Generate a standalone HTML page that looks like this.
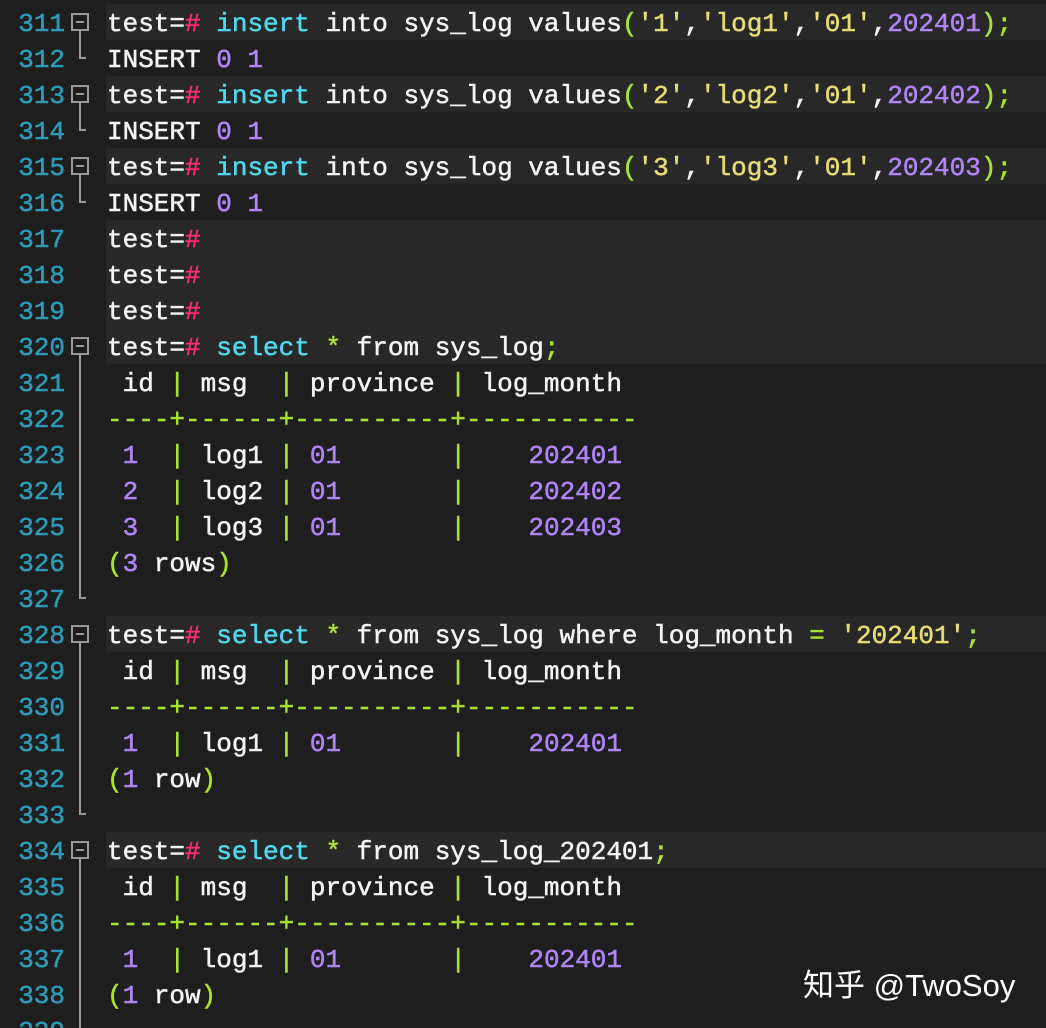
<!DOCTYPE html>
<html><head><meta charset="utf-8"><style>
html,body{margin:0;padding:0;background:#1e1e1e;width:1046px;height:1028px;overflow:hidden}
#c{position:relative;width:1046px;height:1028px;font-family:"Liberation Mono",monospace;font-size:26px}
.l{position:absolute;left:0;width:1046px;height:36px;line-height:40px;white-space:pre;-webkit-text-stroke:0.5px currentColor}
.n{position:absolute;left:0;width:65px;text-align:right;color:#2a9bb8}
.t{position:absolute;left:107px;color:#f4f4f4}
.hl{position:absolute;left:106px;right:0;height:36px;background:#282828}
.p{color:#ff2a7a}.k{color:#4fd8ea}.g{color:#a6e22e}.y{color:#e6db74}.v{color:#b184f5}
#wm{position:absolute;left:803px;top:960px;font-family:"Liberation Sans","Noto Sans CJK SC",sans-serif;font-size:31px;color:#fff}
</style></head><body><div id="c">
<div class="hl" style="top:4px"></div>
<div class="hl" style="top:76px"></div>
<div class="hl" style="top:148px"></div>
<div class="hl" style="top:220px;height:144px"></div>
<div class="hl" style="top:616px"></div>
<div class="hl" style="top:832px"></div>
<svg style="position:absolute;left:0;top:0" width="100" height="1028" fill="none" stroke="#9a9a9a" stroke-width="2">
<g>
<rect x="72" y="14" width="16" height="16"/><line x1="76" y1="22" x2="84" y2="22"/><path d="M80 30V58h6"/>
<rect x="72" y="86" width="16" height="16"/><line x1="76" y1="94" x2="84" y2="94"/><path d="M80 102V130h6"/>
<rect x="72" y="158" width="16" height="16"/><line x1="76" y1="166" x2="84" y2="166"/><path d="M80 174V202h6"/>
<rect x="72" y="338" width="16" height="16"/><line x1="76" y1="346" x2="84" y2="346"/><path d="M80 354V598h6"/>
<rect x="72" y="626" width="16" height="16"/><line x1="76" y1="634" x2="84" y2="634"/><path d="M80 642V814h6"/>
<rect x="72" y="842" width="16" height="16"/><line x1="76" y1="850" x2="84" y2="850"/><path d="M80 858V1028"/>
</g></svg>
<div class="l" style="top:4px"><span class="n">311</span><span class="t">test=<span class="p">#</span> <span class="k">insert</span> into sys_log values<span class="g">(</span><span class="y">'1'</span>,<span class="y">'log1'</span>,<span class="y">'01'</span>,<span class="v">202401</span><span class="g">);</span></span></div>
<div class="l" style="top:40px"><span class="n">312</span><span class="t">INSERT <span class="v">0</span> <span class="v">1</span></span></div>
<div class="l" style="top:76px"><span class="n">313</span><span class="t">test=<span class="p">#</span> <span class="k">insert</span> into sys_log values<span class="g">(</span><span class="y">'2'</span>,<span class="y">'log2'</span>,<span class="y">'01'</span>,<span class="v">202402</span><span class="g">);</span></span></div>
<div class="l" style="top:112px"><span class="n">314</span><span class="t">INSERT <span class="v">0</span> <span class="v">1</span></span></div>
<div class="l" style="top:148px"><span class="n">315</span><span class="t">test=<span class="p">#</span> <span class="k">insert</span> into sys_log values<span class="g">(</span><span class="y">'3'</span>,<span class="y">'log3'</span>,<span class="y">'01'</span>,<span class="v">202403</span><span class="g">);</span></span></div>
<div class="l" style="top:184px"><span class="n">316</span><span class="t">INSERT <span class="v">0</span> <span class="v">1</span></span></div>
<div class="l" style="top:220px"><span class="n">317</span><span class="t">test=<span class="p">#</span></span></div>
<div class="l" style="top:256px"><span class="n">318</span><span class="t">test=<span class="p">#</span></span></div>
<div class="l" style="top:292px"><span class="n">319</span><span class="t">test=<span class="p">#</span></span></div>
<div class="l" style="top:328px"><span class="n">320</span><span class="t">test=<span class="p">#</span> <span class="k">select</span> <span class="g">*</span> from sys_log<span class="g">;</span></span></div>
<div class="l" style="top:364px"><span class="n">321</span><span class="t"> id <span class="g">|</span> msg  <span class="g">|</span> province <span class="g">|</span> log_month</span></div>
<div class="l" style="top:400px"><span class="n">322</span><span class="t g">----+------+----------+-----------</span></div>
<div class="l" style="top:436px"><span class="n">323</span><span class="t"> <span class="v">1</span>  <span class="g">|</span> log1 <span class="g">|</span> <span class="v">01</span>       <span class="g">|</span>    <span class="v">202401</span></span></div>
<div class="l" style="top:472px"><span class="n">324</span><span class="t"> <span class="v">2</span>  <span class="g">|</span> log2 <span class="g">|</span> <span class="v">01</span>       <span class="g">|</span>    <span class="v">202402</span></span></div>
<div class="l" style="top:508px"><span class="n">325</span><span class="t"> <span class="v">3</span>  <span class="g">|</span> log3 <span class="g">|</span> <span class="v">01</span>       <span class="g">|</span>    <span class="v">202403</span></span></div>
<div class="l" style="top:544px"><span class="n">326</span><span class="t"><span class="g">(</span><span class="v">3</span> rows<span class="g">)</span></span></div>
<div class="l" style="top:580px"><span class="n">327</span></div>
<div class="l" style="top:616px"><span class="n">328</span><span class="t">test=<span class="p">#</span> <span class="k">select</span> <span class="g">*</span> from sys_log where log_month <span class="g">=</span> <span class="y">'202401'</span><span class="g">;</span></span></div>
<div class="l" style="top:652px"><span class="n">329</span><span class="t"> id <span class="g">|</span> msg  <span class="g">|</span> province <span class="g">|</span> log_month</span></div>
<div class="l" style="top:688px"><span class="n">330</span><span class="t g">----+------+----------+-----------</span></div>
<div class="l" style="top:724px"><span class="n">331</span><span class="t"> <span class="v">1</span>  <span class="g">|</span> log1 <span class="g">|</span> <span class="v">01</span>       <span class="g">|</span>    <span class="v">202401</span></span></div>
<div class="l" style="top:760px"><span class="n">332</span><span class="t"><span class="g">(</span><span class="v">1</span> row<span class="g">)</span></span></div>
<div class="l" style="top:796px"><span class="n">333</span></div>
<div class="l" style="top:832px"><span class="n">334</span><span class="t">test=<span class="p">#</span> <span class="k">select</span> <span class="g">*</span> from sys_log_202401<span class="g">;</span></span></div>
<div class="l" style="top:868px"><span class="n">335</span><span class="t"> id <span class="g">|</span> msg  <span class="g">|</span> province <span class="g">|</span> log_month</span></div>
<div class="l" style="top:904px"><span class="n">336</span><span class="t g">----+------+----------+-----------</span></div>
<div class="l" style="top:940px"><span class="n">337</span><span class="t"> <span class="v">1</span>  <span class="g">|</span> log1 <span class="g">|</span> <span class="v">01</span>       <span class="g">|</span>    <span class="v">202401</span></span></div>
<div class="l" style="top:976px"><span class="n">338</span><span class="t"><span class="g">(</span><span class="v">1</span> row<span class="g">)</span></span></div>
<div class="l" style="top:1012px"><span class="n">339</span></div>
<div id="wm">知乎 @TwoSoy</div>
</div></body></html>
